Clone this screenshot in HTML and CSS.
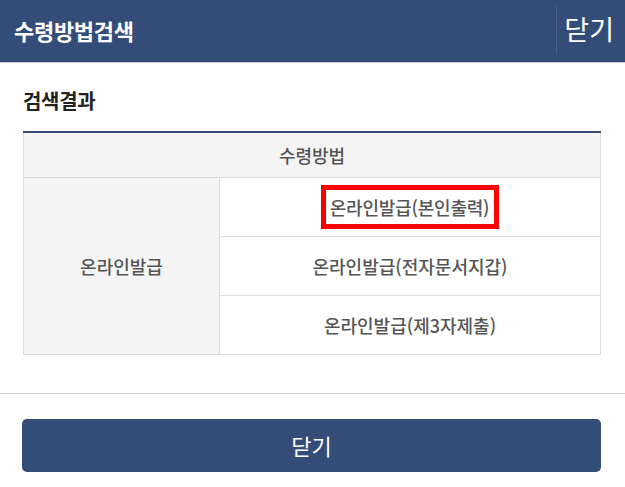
FILE: index.html
```html
<!DOCTYPE html>
<html lang="ko">
<head>
<meta charset="utf-8">
<title>수령방법검색</title>
<link rel="stylesheet" href="styles.css">
</head>
<body>
<header class="top">
  <h1 class="top-title">수령방법검색</h1>
  <button class="top-close" type="button">닫기</button>
</header>
<main class="content">
  <h2 class="section-title">검색결과</h2>
  <table class="result">
    <colgroup>
      <col class="col-group">
      <col class="col-item">
    </colgroup>
    <thead>
      <tr><th colspan="2" class="head-cell">수령방법</th></tr>
    </thead>
    <tbody>
      <tr>
        <th rowspan="3" class="group-cell">온라인발급</th>
        <td class="item-cell"><span class="highlight">온라인발급(본인출력)</span></td>
      </tr>
      <tr><td class="item-cell">온라인발급(전자문서지갑)</td></tr>
      <tr><td class="item-cell">온라인발급(제3자제출)</td></tr>
    </tbody>
  </table>
</main>
<footer class="bottom">
  <button class="btn-close" type="button">닫기</button>
</footer>
</body>
</html>
```

FILE: styles.css
```css
* { box-sizing: border-box; }
html, body {
  margin: 0;
  padding: 0;
  background: #fff;
  font-family: "Noto Sans CJK KR", "Noto Sans", sans-serif;
}
.top {
  height: 63px;
  background: #344c78;
  border-bottom: 1px solid #c8c8c8;
  display: flex;
  align-items: center;
  justify-content: space-between;
  padding: 0 0 0 14px;
}
.top-title {
  margin: 0 0 2px 0;
  color: #fff;
  font-size: 22px;
  font-weight: 700;
  letter-spacing: -0.3px;
  line-height: 30px;
}
.top-close {
  align-self: stretch;
  margin: 5px 0 8px 0;
  border: 0;
  border-left: 1px solid #4b6089;
  background: transparent;
  color: #fff;
  font-family: inherit;
  font-size: 27px;
  font-weight: 400;
  line-height: 1;
  padding: 0 11px 3px 7px;
}
.content {
  padding: 24px 24px 38px 23px;
}
.section-title {
  margin: 0 0 16px 0;
  font-size: 20px;
  font-weight: 700;
  color: #222;
  line-height: 28px;
  letter-spacing: -0.3px;
}
.result {
  width: 100%;
  border-collapse: collapse;
  border: 1px solid #dcdcdc;
  border-top: 2px solid #344c78;
  table-layout: fixed;
}
.col-group { width: 196px; }
.result th, .result td {
  border: 1px solid #dcdcdc;
  text-align: center;
  color: #555;
  font-size: 18px;
  font-weight: 500;
  padding: 0;
}
.head-cell {
  height: 45px;
  background: #f4f4f4;
}
.group-cell {
  background: #f4f4f4;
}
.item-cell {
  height: 59px;
  background: #fff;
}
.highlight {
  display: inline-block;
  border: 5px solid #ff0000;
  padding: 5px 5px 5px 4px;
  letter-spacing: -0.2px;
  line-height: 24px;
}
.bottom {
  border-top: 1px solid #d6d6d6;
  padding: 25px 24px 0 22px;
}
.btn-close {
  display: block;
  width: 100%;
  height: 53px;
  border: 0;
  border-radius: 5px;
  background: #344c78;
  color: #fff;
  font-family: inherit;
  font-size: 22px;
  font-weight: 400;
}
```
